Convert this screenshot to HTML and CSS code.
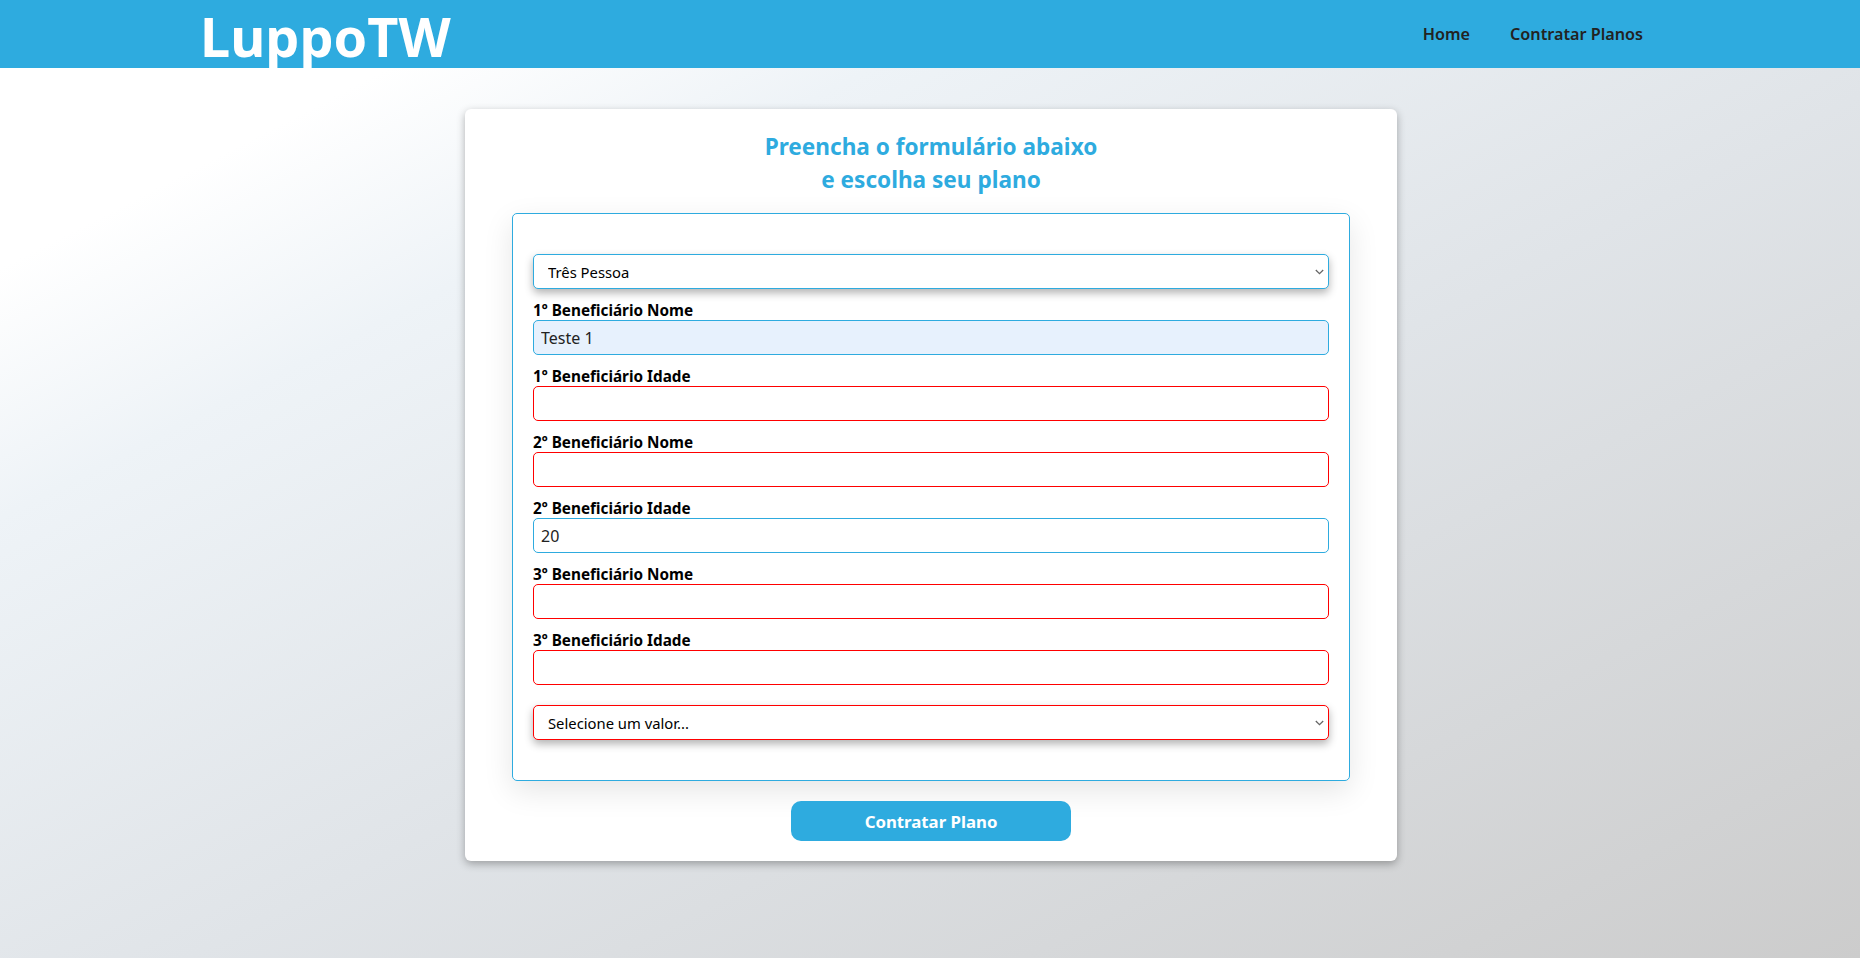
FILE: index.html
```html
<!DOCTYPE html>
<html lang="pt-BR">
<head>
<meta charset="utf-8">
<title>LuppoTW</title>
<link rel="stylesheet" href="styles.css">
</head>
<body>
<header class="topbar">
  <a class="logo" href="#">LuppoTW</a>
  <nav class="nav">
    <a href="#">Home</a>
    <a href="#">Contratar Planos</a>
  </nav>
</header>
<main class="page">
  <form class="card">
    <h1 class="title">Preencha o formulário abaixo<br>e escolha seu plano</h1>
    <div class="panel">
      <select class="select ok">
        <option>Três Pessoa</option>
      </select>
      <div class="field">
        <label class="label">1º Beneficiário Nome</label>
        <input class="input ok filled" type="text" value="Teste 1">
      </div>
      <div class="field">
        <label class="label">1º Beneficiário Idade</label>
        <input class="input bad" type="text">
      </div>
      <div class="field">
        <label class="label">2º Beneficiário Nome</label>
        <input class="input bad" type="text">
      </div>
      <div class="field">
        <label class="label">2º Beneficiário Idade</label>
        <input class="input ok" type="text" value="20">
      </div>
      <div class="field">
        <label class="label">3º Beneficiário Nome</label>
        <input class="input bad" type="text">
      </div>
      <div class="field">
        <label class="label">3º Beneficiário Idade</label>
        <input class="input bad" type="text">
      </div>
      <select class="select bad last">
        <option>Selecione um valor...</option>
      </select>
    </div>
    <button class="submit" type="button">Contratar Plano</button>
  </form>
</main>
</body>
</html>
```
FILE: styles.css
```css
* { box-sizing: border-box; }
html, body { margin: 0; height: 100%; }
body {
  font-family: "Noto Sans", "Open Sans", sans-serif;
  background: linear-gradient(to bottom right, #ffffff 14%, #eef3f7 27%, #e0e4e8 55%, #cccccc 100%);
  min-height: 958px;
  overflow: hidden;
}
.topbar {
  height: 68px;
  background: #2eabdf;
  display: flex;
  align-items: center;
  justify-content: space-between;
  padding: 0 217px 0 200px;
}
.logo {
  color: #fff;
  font-size: 54px;
  font-weight: 700;
  line-height: 62px;
  margin-top: 3px;
  text-decoration: none;
}
.nav { display: flex; gap: 40px; }
.nav a {
  color: #222;
  font-size: 16.2px;
  font-weight: 600;
  text-decoration: none;
}
.page { display: flex; justify-content: center; padding: 41px 0 0 2px; }
.card {
  width: 932px;
  height: 752px;
  background: #fff;
  border-radius: 6px;
  box-shadow: 0 3px 8px rgba(0,0,0,.3);
  padding: 20px 47px;
  display: flex;
  flex-direction: column;
  align-items: center;
}
.title {
  margin: 2px 0 17px;
  color: #2eabdf;
  font-size: 22.6px;
  line-height: 32.5px;
  font-weight: 700;
  text-align: center;
}
.panel {
  width: 838px;
  height: 568px;
  border: 1px solid #2eabdf;
  border-radius: 5px;
  padding: 40px 20px;
  box-shadow: 0 10px 30px rgba(0,0,0,.1);
  display: flex;
  flex-direction: column;
}
.select {
  display: block;
  width: 100%;
  height: 35px;
  flex: none;
  border-radius: 5px;
  appearance: none;
  -webkit-appearance: none;
  background: #fff url("data:image/svg+xml,%3Csvg xmlns='http://www.w3.org/2000/svg' width='9' height='6' viewBox='0 0 9 6'%3E%3Cpath d='M.8 1l3.7 3.6L8.2 1' fill='none' stroke='%23666' stroke-width='1.3'/%3E%3C/svg%3E") no-repeat right 4px center;
  color: #000;
  padding: 0 14px;
  font-family: inherit;
  font-size: 14.8px;
  box-shadow: 0 4px 8px rgba(0,0,0,.3);
  outline: none;
}
.select.last { margin-top: 20px; }
.field { display: flex; flex-direction: column; height: 66px; flex: none; justify-content: flex-end; }
.label {
  font-size: 15.3px;
  font-weight: 700;
  line-height: 21px;
  color: #000;
  height: 20px;
}
.input {
  display: block;
  width: 100%;
  height: 35px;
  flex: none;
  border-radius: 5px;
  background: #fff;
  padding: 1px 7px 0;
  font-family: inherit;
  font-size: 16px;
  color: #222;
  outline: none;
}
.ok { border: 1px solid #2eabdf; }
.bad { border: 1px solid #f00; }
.input.filled { background: #e7f1fd; }
.submit {
  margin-top: 20px;
  width: 280px;
  height: 40px;
  border: none;
  border-radius: 10px;
  background: #2eabdf;
  color: #fff;
  font-family: inherit;
  font-size: 16.8px;
  font-weight: 700;
}
```
